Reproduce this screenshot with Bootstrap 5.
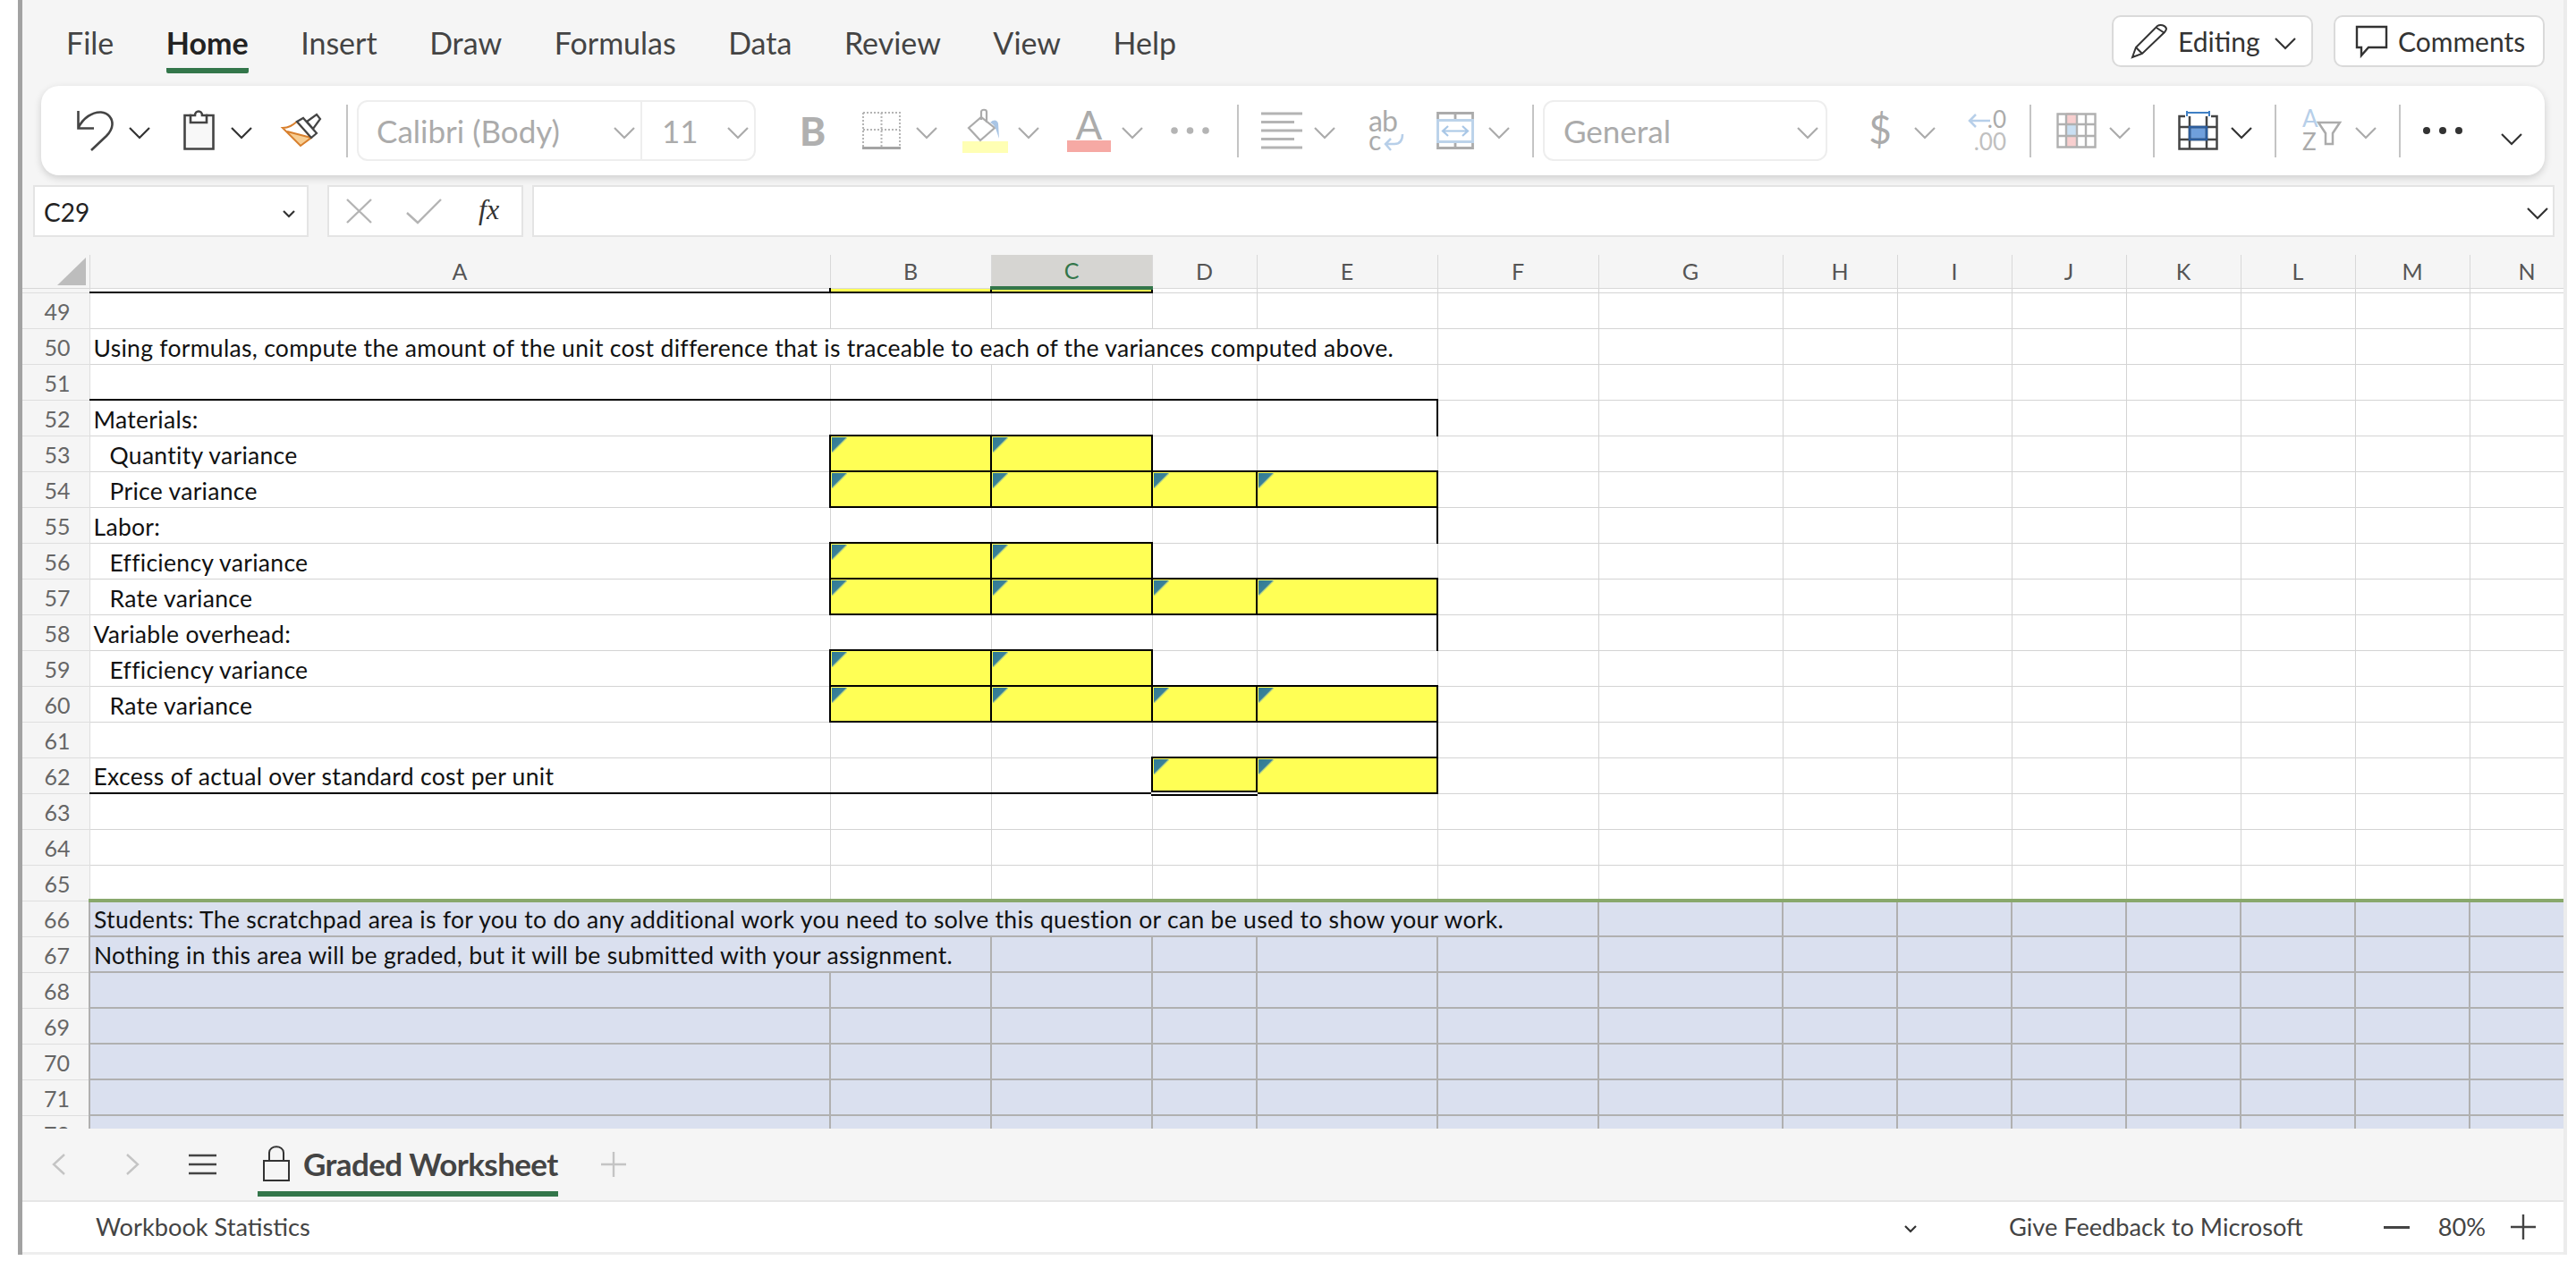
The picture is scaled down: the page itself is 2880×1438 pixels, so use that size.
<!DOCTYPE html>
<html lang="en"><head><meta charset="utf-8"><title>Graded Worksheet</title>
<link href="https://cdn.jsdelivr.net/npm/bootstrap@5.3.0/dist/css/bootstrap.min.css" rel="stylesheet">
<style>
html,body{background:#fff;height:1438px;overflow:hidden}
body{font-family:"Lato","Noto Sans",sans-serif}
.xl-app{margin-left:20px;width:2850px;height:1403px;border-left:5px solid #a2a2a2;border-right:4px solid #ececec;background:#f5f5f5;color:#444;overflow:hidden}
.tabrow{height:96px;padding:0 21px 0 49px;flex:none}
.tablist{gap:58.500px;font-size:34px;line-height:44px;padding-top:26px}
.tablist a{color:#444;text-decoration:none;display:block}
.tablist a.on{color:#222;font-weight:700;border-bottom:6px solid #33764a;border-radius:2px;height:56px;padding:0 0}
.topgrp{padding-top:17px}
.topbtn{height:58px;background:#fff;border:2px solid #dadada;border-radius:10px;font-size:30px;color:#333;padding:0}
.tb-edit{width:225px;padding-left:20px}
.tb-com{width:236px;margin-left:23px;padding-left:23px}
.tb-edit span{margin-left:12px}.tb-com span{margin-left:12px}
.ribbon{height:100px;margin:0 21px 0 21px;background:#fff;border-radius:20px;box-shadow:0 3px 8px rgba(0,0,0,.16);flex:none}
.cv{fill:none;stroke:#333;stroke-width:2.200;margin-top:5px;flex:none}
.cv.off{stroke:#ababab}
.vsep{width:2px;height:59px;background:#c4c4c4;flex:none}
.cbox{height:68px;border:2px solid #eee;border-radius:12px;font-size:35px;color:#ababab;flex:none}
.fbox-name{width:315px;padding:0 0 0 20px}.fbox-size{width:127px;border-left:2px solid #eee;padding-left:22px}.fbox-name .cv{margin-left:auto;margin-right:6px}.fbox-size .cv{margin-left:auto;margin-right:6px}
.cbox-gen{width:318px;padding:0 8px 0 21px;justify-content:space-between}
.boldb{font-size:44px;font-weight:900;color:#b0b0b0;line-height:1;width:26px}
svg{flex:none;display:block;overflow:visible}
svg text{font-family:"Lato",sans-serif}
svg text.fxt{font-family:"Liberation Serif",serif;font-style:italic}
.fxbar{height:58px;margin:11px 0 20px 12px;flex:none}
.fxcell{height:58px;background:#fff;border:2px solid #e4e4e4;flex:none}
.fx-name{width:308px;padding:2px 13px 0 10px;font-size:28px;color:#222}
.fx-btn{width:219px;margin-left:21px;padding-left:19px}
.fx-input{width:2261px;margin-left:10px;padding-right:5px}
.sheetwrap{height:977px;overflow:hidden;background:#fff;flex:none}
table.sheet{table-layout:fixed;width:2864px;border-collapse:collapse;margin:0;font-size:26.500px;letter-spacing:.3px;color:#111;--bs-table-bg:transparent}
.sheet.table th,.sheet.table td{padding:0;height:40px;border:1px solid #d4d4d4;border-top-width:1px;vertical-align:bottom;white-space:nowrap;line-height:30px;overflow:visible}
.sheet.table thead th{height:35px;background:#f5f5f5;font-weight:400;color:#555;text-align:center;border-top:0;border-color:#d8d8d8;vertical-align:middle;font-size:25px;line-height:35px;letter-spacing:0}
.sheet.table thead th.corner{padding:0;border-left:0}
.sheet.table thead th.sel{background:#d6d5d2;color:#33764a;border-bottom:4px solid #33764a}
.sheet.table tbody th{background:#f5f5f5;font-weight:400;color:#666;text-align:right;padding:2px 21px 0 0;border-left:0;border-color:#dedede;font-size:25px;vertical-align:middle;line-height:30px;letter-spacing:0}
.sheet.table tr.tail td,.sheet.table tr.tail th{height:5px;line-height:0;font-size:0;padding:0}
.sheet.table td.tx{padding:0 0 3px 4px}
.sheet.table td.ind{padding-left:22px}
.sheet.table td.y{background:#ffff55;position:relative}
.sheet.table td.y.tri::before{content:"";position:absolute;left:1px;top:1px;width:17px;height:17px;background:linear-gradient(135deg,#2f7a94 0,#3a8199 46%,#a6c98a 50%,rgba(255,255,85,0) 56%)}
.sheet.table td.box{border:2px solid #000}
.sheet.table td.bt{border-top:2px solid #000}
.sheet.table td.bb{border-bottom:2px solid #000}
.sheet.table td.br{border-right:2px solid #000}
.sheet.table td.bl{border-left:2px solid #000}
.sheet.table td.dbl{border-bottom:6px double #000}
.sheet.table tr.sc td{background:#dae0ef;border-right:2px solid #b0b0b0;border-left:2px solid #b0b0b0;border-bottom:2px solid #b0b0b0}
.sheet.table tr.sc th{border-right:1px solid #88a86c}
.sheet.table tr.gr td{border-top:4px solid #88a86c}
.sheettabs{height:82px;border-bottom:2px solid #e6e6e6;flex:none;padding-left:33px}
.stab{margin-left:46px;height:74px;border-bottom:6px solid #33764a;color:#444;font-size:35px;font-weight:700;padding-left:6px;letter-spacing:-.6px;margin-top:-2px;padding-top:6px}
.stab span{margin-left:15px}
.statusb{height:59px;background:#fff;border-bottom:3px solid #eee;flex:none;padding-left:82px;font-size:27.200px;color:#444}
.ic{fill:none;stroke-linecap:butt}
.ml10{margin-left:10px}.ml11{margin-left:11px}.ml12{margin-left:12px}.ml13{margin-left:13px}.ml14{margin-left:14px}.ml15{margin-left:15px}.ml16{margin-left:16px}.ml17{margin-left:17px}.ml18{margin-left:18px}
.ml25{margin-left:25px}.ml26{margin-left:26px}.ml27{margin-left:27px}.ml28{margin-left:28px}.ml29{margin-left:29px}.ml31{margin-left:31px}.ml33{margin-left:33px}.ml35{margin-left:35px}.ml36{margin-left:36px}.ml37{margin-left:37px}.ml38{margin-left:38px}.ml40{margin-left:40px}.ml41{margin-left:41px}.ml43{margin-left:43px}.ml44{margin-left:44px}.ml47{margin-left:47px}.ml48{margin-left:48px}.ml49{margin-left:49px}.ml55{margin-left:55px}.ml68{margin-left:68px}
.cv.low{margin-top:20px}
.c0{width:75px}.ca{width:828px}.cb{width:180px}.cd{width:117px}.ce{width:202px}.cg{width:206px}.ch{width:128px}
.st-fb{margin-left:103px}.st-m{margin-left:90px}.st-z{margin-left:32px}.st-p{margin-left:28px;margin-right:31px}
</style></head><body>
<div class="xl-app d-flex flex-column">
 <div class="tabrow d-flex justify-content-between align-items-start">
  <nav class="tablist d-flex"><a href="#">File</a><a href="#" class="on">Home</a><a href="#">Insert</a><a href="#">Draw</a><a href="#">Formulas</a><a href="#">Data</a><a href="#">Review</a><a href="#">View</a><a href="#">Help</a></nav>
  <div class="topgrp d-flex">
   <button class="topbtn tb-edit d-flex align-items-center"><svg width="40" height="38" viewBox="0 0 40 38" class="ic" stroke="#333" stroke-width="2"><path d="M1 37l4-11L29 2c3-2 9-1 10 3 0 2-1 3-2 4L12 33z"/><path d="M5 26l7 7M28 4l9 6"/></svg><span>Editing</span><svg class="cv ms-3" width="24" height="14" viewBox="0 0 24 14"><path d="M1 1l11 11L23 1"/></svg></button>
   <button class="topbtn tb-com d-flex align-items-center"><svg width="35" height="34" viewBox="0 0 35 34" class="ic" stroke="#333" stroke-width="2.400"><path d="M1 1h33v23H14l-8 9v-9H1z"/></svg><span>Comments</span></button>
  </div>
 </div>
 <div class="ribbon d-flex align-items-center">
  <svg class="ml40 ic" width="43" height="44" viewBox="0 0 43 44" stroke="#444" stroke-width="2.600"><path d="M1.500 0v19.500H19M1.500 19C7 8 17 1 27 1.500c8 .5 13 7 12.500 14-.3 4-3 9-6.500 12.500L16 44"/></svg>
  <svg class="cv ml15" width="24" height="14" viewBox="0 0 24 14"><path d="M1 1l11 11L23 1"/></svg>
  <svg class="ml37" width="35" height="44" viewBox="0 0 35 44" stroke="#444" stroke-width="2.600"><path d="M9 5H1.500v37.500h32V5H25" fill="#f8f8f8"/><path d="M8 13V5h5c0-6 8-6 8 0h5v8z" fill="#fff"/></svg>
  <svg class="cv ml18" width="24" height="14" viewBox="0 0 24 14"><path d="M1 1l11 11L23 1"/></svg>
  <svg class="ml33" width="46" height="38" viewBox="0 0 46 38"><path d="M6 20L33 27 21 36z" fill="#f7cd92"/><path d="M1 16C8 16 12 13 17 9L33 27 21 36zM6 20l27 7" fill="none" stroke="#d87f2c" stroke-width="2"/><path d="M28 9L39 1l4 5-8 11z" fill="#fff" stroke="#444" stroke-width="2.200"/><path d="M17 9l7-4 15 17-6 5z" fill="#fff" stroke="#444" stroke-width="2.200"/></svg>
  <div class="vsep ml26"></div>
  <div class="cbox ml10 d-flex">
   <div class="fbox-name d-flex align-items-center">Calibri (Body)<svg class="cv off" width="24" height="14" viewBox="0 0 24 14"><path d="M1 1l11 11L23 1"/></svg></div>
   <div class="fbox-size d-flex align-items-center">11<svg class="cv off" width="24" height="14" viewBox="0 0 24 14"><path d="M1 1l11 11L23 1"/></svg></div>
  </div>
  <div class="boldb ml49">B</div>
  <svg class="ml44" width="43" height="42" viewBox="0 0 43 42" fill="none" stroke="#b4b4b4" stroke-width="2" stroke-dasharray="2 2"><path d="M1 1h41v38M1 1v38M21.500 1v38M1 20h41"/><path d="M0 40.500h43" stroke="#a4a4a4" stroke-width="3" stroke-dasharray="none"/></svg>
  <svg class="cv off ml17" width="24" height="14" viewBox="0 0 24 14"><path d="M1 1l11 11L23 1"/></svg>
  <svg class="ml28" width="51" height="49" viewBox="0 0 51 49"><rect y="36" width="51" height="13" fill="#ffffb4"/><path d="M7 21L21 9l15 12-16 14zM21 12V3c0-3 6-3 6 0v12" fill="none" stroke="#ababab" stroke-width="2.200"/><path d="M31 15c4-4 8-3 9 1l1 17c-2-5-3-11-6-15-1-1-2-2-4-3z" fill="#a9c5e5"/></svg>
  <svg class="cv off ml11" width="24" height="14" viewBox="0 0 24 14"><path d="M1 1l11 11L23 1"/></svg>
  <svg class="ml31" width="49" height="47" viewBox="0 0 49 47"><text x="24.500" y="33" font-size="44" text-anchor="middle" fill="#ababab">A</text><rect y="34" width="49" height="13" fill="#f6a9a4"/></svg>
  <svg class="cv off ml12" width="24" height="14" viewBox="0 0 24 14"><path d="M1 1l11 11L23 1"/></svg>
  <svg class="ml31" width="43" height="10" viewBox="0 0 43 10" fill="#b4b4b4"><circle cx="4" cy="5" r="3.800"/><circle cx="21.500" cy="5" r="3.800"/><circle cx="39" cy="5" r="3.800"/></svg>
  <div class="vsep ml31"></div>
  <svg class="ml25" width="46" height="42" viewBox="0 0 46 42" stroke="#b4b4b4" stroke-width="3"><path d="M0 2h46M0 11.500h37M0 21h46M0 30.500h37M0 40h46"/></svg>
  <svg class="cv off ml13" width="24" height="14" viewBox="0 0 24 14"><path d="M1 1l11 11L23 1"/></svg>
  <svg class="ml37" width="41" height="44" viewBox="0 0 41 44"><text x="0" y="23" font-size="32" fill="#ababab" letter-spacing="-1">ab</text><text x="0" y="44" font-size="30" fill="#ababab">c</text><path d="M38 26c0 7-3 11-9 11H19m6-6l-6 6 6 7" fill="none" stroke="#b7cfe9" stroke-width="2.500"/></svg>
  <svg class="ml35" width="42" height="42" viewBox="0 0 42 42" fill="none"><path d="M1.500 9V1.500h39V9M1.500 33v7.500h39V33M21 1v8M21 33v8" stroke="#ababab" stroke-width="2.800"/><rect x="1.500" y="9.500" width="39" height="24" stroke="#bcd3ea" stroke-width="3"/><path d="M8 21.500h26M13 16l-6 5.500 6 5.500M29 16l6 5.500-6 5.500" stroke="#a9c7e6" stroke-width="2.200"/></svg>
  <svg class="cv off ml16" width="24" height="14" viewBox="0 0 24 14"><path d="M1 1l11 11L23 1"/></svg>
  <div class="vsep ml25"></div>
  <div class="cbox cbox-gen ml10 d-flex align-items-center">General<svg class="cv off" width="24" height="14" viewBox="0 0 24 14"><path d="M1 1l11 11L23 1"/></svg></div>
  <svg class="ml48" width="22" height="46" viewBox="0 0 22 46"><text x="11" y="38" font-size="44" text-anchor="middle" fill="#ababab">$</text></svg>
  <svg class="cv off ml27" width="24" height="14" viewBox="0 0 24 14"><path d="M1 1l11 11L23 1"/></svg>
  <svg class="ml36" width="43" height="45" viewBox="0 0 43 45"><text x="43" y="19" font-size="26" text-anchor="end" fill="#ababab">.0</text><text x="43" y="44" font-size="26" text-anchor="end" fill="#c0c0c0">.00</text><path d="M25 11H2m7-7l-7 7 7 7" fill="none" stroke="#b7cfe9" stroke-width="2.500"/></svg>
  <div class="vsep ml26"></div>
  <svg class="ml28" width="45" height="40" viewBox="0 0 45 40" fill="none"><rect x="11" y="0" width="12" height="12" fill="#f8cfcf"/><rect x="11" y="26" width="12" height="13" fill="#f8cfcf"/><rect x="11" y="13" width="12" height="12" fill="#c9dff2"/><path d="M1.500 1.500h42v37h-42zM1.500 13h42M1.500 26h42M11 1v38M23 1v38M33 1v38" stroke="#b0b0b0" stroke-width="2.400"/></svg>
  <svg class="cv off ml14" width="24" height="14" viewBox="0 0 24 14"><path d="M1 1l11 11L23 1"/></svg>
  <div class="vsep ml25"></div>
  <svg class="ml26" width="45" height="44" viewBox="0 0 45 44" fill="none"><path d="M10 2h25M10 0v6M35 0v6" stroke="#3f7fc4" stroke-width="2"/><rect x="13" y="18" width="19" height="14" fill="#6f9fdc"/><path d="M8 6H1.500v36.500h42V6H37M1 18h43M1 32h43M13 6v37M32 6v37" stroke="#444" stroke-width="2.500"/><path d="M13 18h19v14H13z" stroke="#2b5c9c" stroke-width="2.500"/></svg>
  <svg class="cv ml14" width="24" height="14" viewBox="0 0 24 14"><path d="M1 1l11 11L23 1"/></svg>
  <div class="vsep ml25"></div>
  <svg class="ml29" width="43" height="46" viewBox="0 0 43 46"><text x="0" y="19" font-size="26" fill="#b7cfe9">A</text><text x="0" y="45" font-size="26" fill="#ababab">Z</text><path d="M18 14h24l-8 12v12h-8V26z" fill="none" stroke="#ababab" stroke-width="2.500"/></svg>
  <svg class="cv off ml16" width="24" height="14" viewBox="0 0 24 14"><path d="M1 1l11 11L23 1"/></svg>
  <div class="vsep ml25"></div>
  <svg class="ml25" width="44" height="10" viewBox="0 0 44 10" fill="#333"><circle cx="4" cy="5" r="4"/><circle cx="22" cy="5" r="4"/><circle cx="40" cy="5" r="4"/></svg>
  <svg class="cv low ml43" width="24" height="14" viewBox="0 0 24 14"><path d="M1 1l11 11L23 1"/></svg>
 </div>
 <div class="fxbar d-flex">
  <div class="fxcell fx-name d-flex align-items-center justify-content-between">C29<svg class="cv" width="14" height="9" viewBox="0 0 14 9" stroke-width="3"><path d="M1 1l6 6 6-6"/></svg></div>
  <div class="fxcell fx-btn d-flex align-items-center"><svg width="29" height="28" viewBox="0 0 29 28" stroke="#b4b4b4" stroke-width="2.400"><path d="M1 1l27 26M28 1L1 27"/></svg><svg class="ml38 ic" width="40" height="28" viewBox="0 0 40 28" stroke="#b4b4b4" stroke-width="2.400"><path d="M1 16l12 11L39 1"/></svg><svg class="ml41" width="30" height="34" viewBox="0 0 30 34"><text class="fxt" x="0" y="26" font-size="32" fill="#333">fx</text></svg></div>
  <div class="fxcell fx-input d-flex align-items-center justify-content-end"><svg class="cv" width="24" height="14" viewBox="0 0 24 14"><path d="M1 1l11 11L23 1"/></svg></div>
 </div>
 <div class="sheetwrap">
 <table class="table sheet">
  <colgroup><col class="c0"><col class="ca"><col class="cb"><col class="cb"><col class="cd"><col class="ce"><col class="cb"><col class="cg"><col class="ch"><col class="ch"><col class="ch"><col class="ch"><col class="ch"><col class="ch"><col class="ch"></colgroup>
  <thead><tr><th class="corner"><svg class="ms-auto me-1" width="32" height="31" viewBox="0 0 32 31"><path d="M32 0v31H0z" fill="#bdbdbd"/></svg></th><th>A</th><th>B</th><th class="sel">C</th><th>D</th><th>E</th><th>F</th><th>G</th><th>H</th><th>I</th><th>J</th><th>K</th><th>L</th><th>M</th><th>N</th></tr></thead>
  <tbody>
  <tr class="tail"><th></th><td class="bb"></td><td class="bb y bl"></td><td class="bb y bl br"></td><td></td><td></td><td></td><td></td><td></td><td></td><td></td><td></td><td></td><td></td><td></td></tr>
  <tr><th>49</th><td></td><td></td><td></td><td></td><td></td><td></td><td></td><td></td><td></td><td></td><td></td><td></td><td></td><td></td></tr>
  <tr><th>50</th><td class="tx" colspan="5">Using formulas, compute the amount of the unit cost difference that is traceable to each of the variances computed above.</td><td></td><td></td><td></td><td></td><td></td><td></td><td></td><td></td><td></td></tr>
  <tr><th>51</th><td></td><td></td><td></td><td></td><td></td><td></td><td></td><td></td><td></td><td></td><td></td><td></td><td></td><td></td></tr>
  <tr><th>52</th><td class="tx bt">Materials:</td><td class="bt"></td><td class="bt"></td><td class="bt"></td><td class="bt br"></td><td></td><td></td><td></td><td></td><td></td><td></td><td></td><td></td><td></td></tr>
  <tr><th>53</th><td class="tx ind">Quantity variance</td><td class="y tri box"></td><td class="y tri box"></td><td></td><td></td><td></td><td></td><td></td><td></td><td></td><td></td><td></td><td></td><td></td></tr>
  <tr><th>54</th><td class="tx ind">Price variance</td><td class="y tri box"></td><td class="y tri box"></td><td class="y tri box"></td><td class="y tri box"></td><td></td><td></td><td></td><td></td><td></td><td></td><td></td><td></td><td></td></tr>
  <tr><th>55</th><td class="tx">Labor:</td><td></td><td></td><td></td><td class="br"></td><td></td><td></td><td></td><td></td><td></td><td></td><td></td><td></td><td></td></tr>
  <tr><th>56</th><td class="tx ind">Efficiency variance</td><td class="y tri box"></td><td class="y tri box"></td><td></td><td></td><td></td><td></td><td></td><td></td><td></td><td></td><td></td><td></td><td></td></tr>
  <tr><th>57</th><td class="tx ind">Rate variance</td><td class="y tri box"></td><td class="y tri box"></td><td class="y tri box"></td><td class="y tri box"></td><td></td><td></td><td></td><td></td><td></td><td></td><td></td><td></td><td></td></tr>
  <tr><th>58</th><td class="tx">Variable overhead:</td><td></td><td></td><td></td><td class="br"></td><td></td><td></td><td></td><td></td><td></td><td></td><td></td><td></td><td></td></tr>
  <tr><th>59</th><td class="tx ind">Efficiency variance</td><td class="y tri box"></td><td class="y tri box"></td><td></td><td></td><td></td><td></td><td></td><td></td><td></td><td></td><td></td><td></td><td></td></tr>
  <tr><th>60</th><td class="tx ind">Rate variance</td><td class="y tri box"></td><td class="y tri box"></td><td class="y tri box"></td><td class="y tri box"></td><td></td><td></td><td></td><td></td><td></td><td></td><td></td><td></td><td></td></tr>
  <tr><th>61</th><td></td><td></td><td></td><td></td><td class="br"></td><td></td><td></td><td></td><td></td><td></td><td></td><td></td><td></td><td></td></tr>
  <tr><th>62</th><td class="tx bb">Excess of actual over standard cost per unit</td><td class="bb"></td><td class="bb"></td><td class="y tri box dbl"></td><td class="y tri box"></td><td></td><td></td><td></td><td></td><td></td><td></td><td></td><td></td><td></td></tr>
  <tr><th>63</th><td></td><td></td><td></td><td></td><td></td><td></td><td></td><td></td><td></td><td></td><td></td><td></td><td></td><td></td></tr>
  <tr><th>64</th><td></td><td></td><td></td><td></td><td></td><td></td><td></td><td></td><td></td><td></td><td></td><td></td><td></td><td></td></tr>
  <tr><th>65</th><td></td><td></td><td></td><td></td><td></td><td></td><td></td><td></td><td></td><td></td><td></td><td></td><td></td><td></td></tr>
  <tr class="sc gr"><th>66</th><td class="tx" colspan="6">Students: The scratchpad area is for you to do any additional work you need to solve this question or can be used to show your work.</td><td></td><td></td><td></td><td></td><td></td><td></td><td></td><td></td></tr>
  <tr class="sc"><th>67</th><td class="tx" colspan="2">Nothing in this area will be graded, but it will be submitted with your assignment.</td><td></td><td></td><td></td><td></td><td></td><td></td><td></td><td></td><td></td><td></td><td></td><td></td></tr>
  <tr class="sc"><th>68</th><td></td><td></td><td></td><td></td><td></td><td></td><td></td><td></td><td></td><td></td><td></td><td></td><td></td><td></td></tr>
  <tr class="sc"><th>69</th><td></td><td></td><td></td><td></td><td></td><td></td><td></td><td></td><td></td><td></td><td></td><td></td><td></td><td></td></tr>
  <tr class="sc"><th>70</th><td></td><td></td><td></td><td></td><td></td><td></td><td></td><td></td><td></td><td></td><td></td><td></td><td></td><td></td></tr>
  <tr class="sc"><th>71</th><td></td><td></td><td></td><td></td><td></td><td></td><td></td><td></td><td></td><td></td><td></td><td></td><td></td><td></td></tr>
  <tr class="sc"><th>72</th><td></td><td></td><td></td><td></td><td></td><td></td><td></td><td></td><td></td><td></td><td></td><td></td><td></td><td></td></tr>
  </tbody>
 </table>
 </div>
 <div class="sheettabs d-flex align-items-center">
  <svg class="ic" width="15" height="24" viewBox="0 0 15 24" stroke="#c4c4c4" stroke-width="2.400"><path d="M14 1L2 12l12 11"/></svg>
  <svg class="ic ml68" width="15" height="24" viewBox="0 0 15 24" stroke="#c4c4c4" stroke-width="2.400"><path d="M1 1l12 11L1 23"/></svg>
  <svg class="ml55" width="31" height="24" viewBox="0 0 31 24" stroke="#444" stroke-width="2.600"><path d="M0 2h31M0 12h31M0 22h31"/></svg>
  <div class="stab d-flex align-items-center"><svg class="ic" width="30" height="40" viewBox="0 0 30 40" stroke="#333" stroke-width="2"><path d="M1 17h28v22H1zM7 17V8c0-9 16-9 16 0v9"/></svg><span>Graded Worksheet</span></div>
  <svg class="ic ms-5" width="28" height="28" viewBox="0 0 28 28" stroke="#c4c4c4" stroke-width="2.400"><path d="M14 0v28M0 14h28"/></svg>
 </div>
 <div class="statusb d-flex align-items-center">
  <span>Workbook Statistics</span>
  <svg class="cv ms-auto" width="14" height="9" viewBox="0 0 14 9" stroke-width="3"><path d="M1 1l6 6 6-6"/></svg>
  <span class="st-fb">Give Feedback to Microsoft</span>
  <svg class="st-m" width="29" height="3" viewBox="0 0 29 3" stroke="#444" stroke-width="3"><path d="M0 1.500h29"/></svg>
  <span class="st-z">80%</span>
  <svg class="st-p" width="28" height="28" viewBox="0 0 28 28" stroke="#444" stroke-width="2.400"><path d="M14 0v28M0 14h28"/></svg>
 </div>
</div>
<script src="https://cdn.jsdelivr.net/npm/bootstrap@5.3.0/dist/js/bootstrap.bundle.min.js"></script>
</body></html>
